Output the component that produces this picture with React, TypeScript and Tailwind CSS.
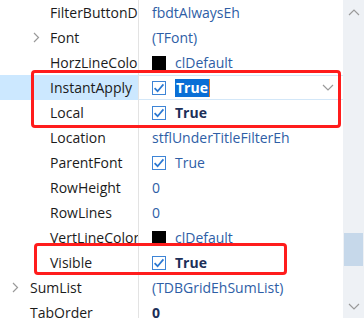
import React from "react";

type Row = {
  name: string;
  level: 0 | 1;
  chevron?: boolean;
  kind: "text" | "swatch" | "check";
  value: string;
  bold?: boolean;
  selected?: boolean;
};

const rows: Row[] = [
  { name: "FilterButtonD", level: 1, kind: "text", value: "fbdtAlwaysEh" },
  { name: "Font", level: 1, chevron: true, kind: "text", value: "(TFont)" },
  { name: "HorzLineColo", level: 1, kind: "swatch", value: "clDefault" },
  { name: "InstantApply", level: 1, kind: "check", value: "True", bold: true, selected: true },
  { name: "Local", level: 1, kind: "check", value: "True", bold: true },
  { name: "Location", level: 1, kind: "text", value: "stflUnderTitleFilterEh" },
  { name: "ParentFont", level: 1, kind: "check", value: "True" },
  { name: "RowHeight", level: 1, kind: "text", value: "0" },
  { name: "RowLines", level: 1, kind: "text", value: "0" },
  { name: "VertLineColor", level: 1, kind: "swatch", value: "clDefault" },
  { name: "Visible", level: 1, kind: "check", value: "True", bold: true },
  { name: "SumList", level: 0, chevron: true, kind: "text", value: "(TDBGridEhSumList)" },
  { name: "TabOrder", level: 0, kind: "text", value: "0", bold: true },
];

function Chevron({ dir, className }: { dir: "right" | "down" | "up"; className?: string }) {
  const d =
    dir === "right" ? "M2 1 L6.5 5.5 L2 10" : dir === "down" ? "M1 2 L6 7 L11 2" : "M1 7 L6 2 L11 7";
  const w = dir === "right" ? 9 : 12;
  const h = dir === "right" ? 11 : 9;
  return (
    <svg width={w} height={h} viewBox={`0 0 ${w} ${h}`} className={className}>
      <path d={d} fill="none" stroke="#9a9a9a" strokeWidth="1.2" />
    </svg>
  );
}

function CheckBox() {
  return (
    <svg width="14" height="14" viewBox="0 0 14 14" className="shrink-0">
      <rect x="0.5" y="0.5" width="13" height="13" fill="#fff" stroke="#3d84d6" strokeWidth="1" />
      <path d="M2.6 7.1 L5.6 10.2 L11.4 3.4" fill="none" stroke="#2a78d2" strokeWidth="1.7" />
    </svg>
  );
}

export default function App() {
  return (
    <div
      className="relative flex h-[318px] w-[364px] overflow-hidden bg-white text-[14px]"
      style={{ fontFamily: '"Open Sans", "Noto Sans", sans-serif' }}
    >
      <div className="flex w-[343px] flex-col">
        {rows.map((r) => (
          <div key={r.name} className="flex h-[25px] shrink-0">
            <div
              className={`relative flex w-[139px] shrink-0 items-center overflow-hidden whitespace-nowrap border-r border-[#e3e3e3] text-[#1b1b1b] ${
                r.level === 1 ? "pl-[50px]" : "pl-[30px]"
              } ${r.selected ? "bg-[#cce8ff]" : ""}`}
            >
              {r.chevron && (
                <span
                  className={`absolute top-[7px] ${r.level === 1 ? "left-[32px]" : "left-[11px]"}`}
                >
                  <Chevron dir="right" />
                </span>
              )}
              <span className="leading-[25px]">{r.name}</span>
            </div>
            <div
              className={`flex flex-1 items-center overflow-hidden whitespace-nowrap pl-[13px] ${
                r.selected ? "border-y border-[#d3e7f8]" : ""
              }`}
            >
              {r.kind === "swatch" && (
                <span className="mr-[9px] h-[14px] w-[14px] shrink-0 bg-black" />
              )}
              {r.kind === "check" && (
                <span className="mr-[9px] flex">
                  <CheckBox />
                </span>
              )}
              {r.selected ? (
                <span className="flex items-center">
                  <span className="bg-[#0a6fd6] px-[1px] font-bold leading-[18px] text-white">
                    {r.value}
                  </span>
                  <span className="h-[18px] w-[1px] bg-[#e07a2a]" />
                </span>
              ) : (
                <span
                  className={`leading-[25px] ${
                    r.bold ? "font-bold text-[#1c2f58]" : "text-[#2e5ea6]"
                  }`}
                >
                  {r.value}
                </span>
              )}
              {r.selected && (
                <span className="ml-auto mr-[9px] flex">
                  <Chevron dir="down" />
                </span>
              )}
            </div>
          </div>
        ))}
      </div>
      <div className="flex w-[21px] flex-col items-center bg-[#eef1f5]">
        <div className="flex h-[25px] items-center justify-center">
          <Chevron dir="up" />
        </div>
        <div className="relative w-full flex-1">
          <div className="absolute left-[1px] right-[1px] top-[208px] h-[33px] bg-[#c6d8ea]" />
        </div>
        <div className="flex h-[24px] items-center justify-center">
          <Chevron dir="down" />
        </div>
      </div>

      <div className="pointer-events-none absolute left-[31px] top-[70px] h-[58px] w-[310px] rounded-[4px] border-[3px] border-[#ff1c1c]" />
      <div className="pointer-events-none absolute left-[34px] top-[243px] h-[32px] w-[253px] rounded-[4px] border-[3px] border-[#ff1c1c]" />
    </div>
  );
}
